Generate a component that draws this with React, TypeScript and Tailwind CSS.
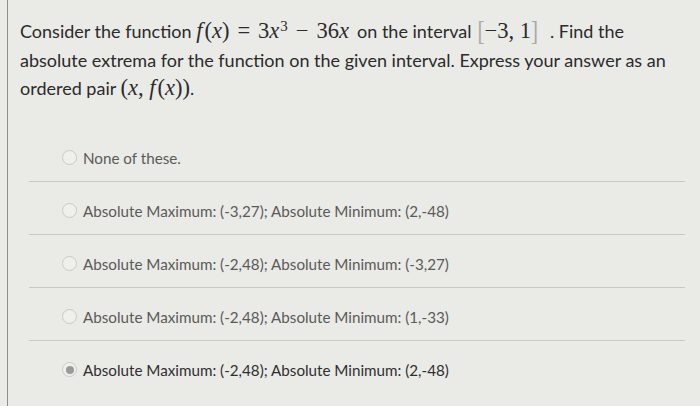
import React from "react"

const options = [
  { label: "None of these.", selected: false },
  { label: "Absolute Maximum: (-3,27); Absolute Minimum: (2,-48)", selected: false },
  { label: "Absolute Maximum: (-2,48); Absolute Minimum: (-3,27)", selected: false },
  { label: "Absolute Maximum: (-2,48); Absolute Minimum: (1,-33)", selected: false },
  { label: "Absolute Maximum: (-2,48); Absolute Minimum: (2,-48)", selected: true },
]

// math variable (italic serif, KaTeX-like)
function M({ children }: { children: React.ReactNode }) {
  return <span className="font-['Liberation_Serif',serif] italic text-[22.5px]">{children}</span>
}

// italic f with a little correction space
function F() {
  return <span className="mr-[2px] font-['Liberation_Serif',serif] italic text-[22.5px]">f</span>
}

// upright math
function R({ children }: { children: React.ReactNode }) {
  return <span className="font-['Liberation_Serif',serif] text-[22.5px]">{children}</span>
}

function Radio({ selected }: { selected: boolean }) {
  return (
    <span className="flex h-[15px] w-[15px] shrink-0 items-center justify-center rounded-full border border-[#c9c9c6] bg-[#efefec]">
      {selected && <span className="h-[8px] w-[8px] rounded-full bg-[#9a9a98]" />}
    </span>
  )
}

export default function App() {
  return (
    <div className="min-h-[406px] w-[700px] overflow-hidden bg-[#eaeae7] font-['Lato',sans-serif]">
      <div className="ml-[7px] min-h-[406px] border-l border-[#8e8e8c] pl-[12px] pt-[17px]">
        {/* Question */}
        <div className="whitespace-nowrap text-[18px] leading-[28.5px] text-[#2b2b2b]">
          Consider the function <F />
          <R>(</R>
          <M>x</M>
          <R>)</R>
          <span className="mx-[8px] font-['Liberation_Serif',serif] text-[22.5px]">=</span>
          <R>3</R>
          <M>x</M>
          <sup className="ml-[1px] font-['Liberation_Serif',serif] text-[15px]">3</sup>
          <span className="mx-[8px] font-['Liberation_Serif',serif] text-[22.5px]">−</span>
          <R>36</R>
          <M>x</M>
          <span className="ml-[8px]">on the interval</span>
          <span className="ml-[6px] inline-block scale-y-[1.25] font-['Liberation_Serif',serif] text-[21px] font-light text-[#a9a9a7]">
            [
          </span>
          <R>−3, 1</R>
          <span className="inline-block scale-y-[1.25] font-['Liberation_Serif',serif] text-[21px] font-light text-[#a9a9a7]">
            ]
          </span>
          <span className="ml-[12px]">. Find the</span>
          <br />
          absolute extrema for the function on the given interval. Express your answer as an
          <br />
          ordered pair <R>(</R>
          <M>x</M>
          <R>,&nbsp;</R>
          <F />
          <R>(</R>
          <M>x</M>
          <R>))</R>.
        </div>

        {/* Options */}
        <div className="mr-[15px] ml-[9px] mt-[45px]">
          {options.map((o, i) => (
            <div
              key={i}
              className={`flex items-center gap-[6px] pl-[33px] text-[15.2px] leading-[20px] ${
                i === 0 ? "pb-[13px]" : "border-t border-[#c8c8c5] pt-[19px] pb-[13px]"
              } ${o.selected ? "text-[#2f2f2f]" : "text-[#5a5a58]"}`}
            >
              <Radio selected={o.selected} />
              <span>{o.label}</span>
            </div>
          ))}
        </div>
      </div>
    </div>
  )
}
